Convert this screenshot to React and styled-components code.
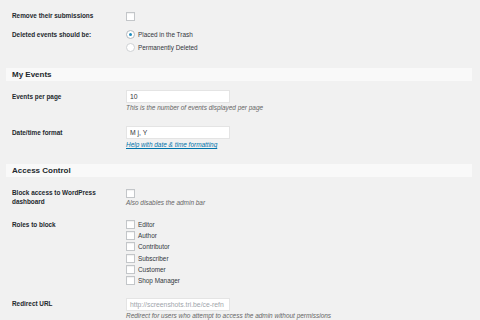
import React from "react";
import styled, { createGlobalStyle } from "styled-components";

const GlobalStyle = createGlobalStyle`
  html, body {
    margin: 0;
    padding: 0;
    background: #f1f1f1;
  }
  body {
    font-family: "Liberation Sans", Arial, sans-serif;
    color: #23282d;
  }
`;

const Page = styled.div`
  width: 480px;
  height: 320px;
  overflow: hidden;
  padding: 0 8px 0 6px;
  box-sizing: border-box;
`;

const Row = styled.div`
  display: flex;
  align-items: flex-start;
  padding-left: 6px;
  margin-top: ${(p) => p.$mt}px;
`;

const Label = styled.div`
  width: 114px;
  flex-shrink: 0;
  font-size: 6.4px;
  line-height: 9px;
  font-weight: bold;
  color: #23282d;
  margin-top: ${(p) => p.$mt || 0}px;
`;

const Field = styled.div`
  display: flex;
  flex-direction: column;
  align-items: flex-start;
`;

const SectionBar = styled.div`
  margin-top: ${(p) => p.$mt}px;
  height: 13px;
  background: #f9f9f9;
  display: flex;
  align-items: center;
  padding-left: 6px;
  font-size: 8px;
  font-weight: bold;
  color: #23282d;
`;

const Box = styled.span`
  display: inline-block;
  width: 7px;
  height: 7px;
  border: 1px solid #c3c6c9;
  background: #fff;
  box-shadow: inset 0 1px 1px rgba(0, 0, 0, 0.06);
  box-sizing: content-box;
  margin-top: ${(p) => p.$mt || 0}px;
  flex-shrink: 0;
`;

const Radio = styled.span`
  display: inline-flex;
  align-items: center;
  justify-content: center;
  width: 7px;
  height: 7px;
  border-radius: 50%;
  border: 1px solid ${(p) => (p.$on ? "#b4b9be" : "#cfd2d5")};
  background: #fff;
  flex-shrink: 0;
  &::after {
    content: "";
    display: ${(p) => (p.$on ? "block" : "none")};
    width: 3px;
    height: 3px;
    border-radius: 50%;
    background: #1e8cbe;
  }
`;

const Option = styled.div`
  display: flex;
  align-items: center;
  gap: 3px;
  height: ${(p) => p.$h || 9}px;
  margin-top: ${(p) => p.$mt || 0}px;
  font-size: 6.4px;
  color: #32373c;
`;

const TextInput = styled.div`
  width: 104px;
  height: 13px;
  box-sizing: border-box;
  background: #fff;
  border: 1px solid #e4e4e4;
  display: flex;
  align-items: center;
  padding-left: 3px;
  font-size: 6.8px;
  color: ${(p) => (p.$placeholder ? "#a0a5aa" : "#32373c")};
  overflow: hidden;
  white-space: nowrap;
`;

const Help = styled.div`
  font-size: 6.45px;
  line-height: 9px;
  font-style: italic;
  color: #666;
  white-space: nowrap;
  margin-top: ${(p) => p.$mt || 0}px;
`;

const HelpLink = styled.a`
  font-size: 6.45px;
  line-height: 9px;
  font-style: italic;
  color: #0073aa;
  text-decoration: underline;
  margin-top: 1px;
`;

const roles = ["Editor", "Author", "Contributor", "Subscriber", "Customer", "Shop Manager"];

export default function App() {
  return (
    <Page>
      <GlobalStyle />
      <Row $mt={11}>
        <Label>Remove their submissions</Label>
        <Field>
          <Box $mt={1} />
        </Field>
      </Row>
      <Row $mt={8.5}>
        <Label>Deleted events should be:</Label>
        <Field>
          <Option>
            <Radio $on />
            Placed in the Trash
          </Option>
          <Option $mt={4}>
            <Radio />
            Permanently Deleted
          </Option>
        </Field>
      </Row>

      <SectionBar $mt={16.5}>My Events</SectionBar>

      <Row $mt={9}>
        <Label $mt={1.5}>Events per page</Label>
        <Field>
          <TextInput>10</TextInput>
          <Help>This is the number of events displayed per page</Help>
        </Field>
      </Row>
      <Row $mt={14}>
        <Label $mt={1.5}>Date/time format</Label>
        <Field>
          <TextInput>M j, Y</TextInput>
          <HelpLink>Help with date &amp; time formatting</HelpLink>
        </Field>
      </Row>

      <SectionBar $mt={15}>Access Control</SectionBar>

      <Row $mt={11}>
        <Label>
          Block access to WordPress
          <br />
          dashboard
        </Label>
        <Field>
          <Box $mt={1} />
          <Help $mt={0}>Also disables the admin bar</Help>
        </Field>
      </Row>
      <Row $mt={12}>
        <Label $mt={1}>Roles to block</Label>
        <Field>
          {roles.map((r) => (
            <Option key={r} $h={11.2}>
              <Box />
              {r}
            </Option>
          ))}
        </Field>
      </Row>
      <Row $mt={11.5}>
        <Label $mt={1}>Redirect URL</Label>
        <Field>
          <TextInput $placeholder>http://screenshots.tri.be/ce-refn</TextInput>
          <Help>Redirect for users who attempt to access the admin without permissions</Help>
        </Field>
      </Row>
    </Page>
  );
}
